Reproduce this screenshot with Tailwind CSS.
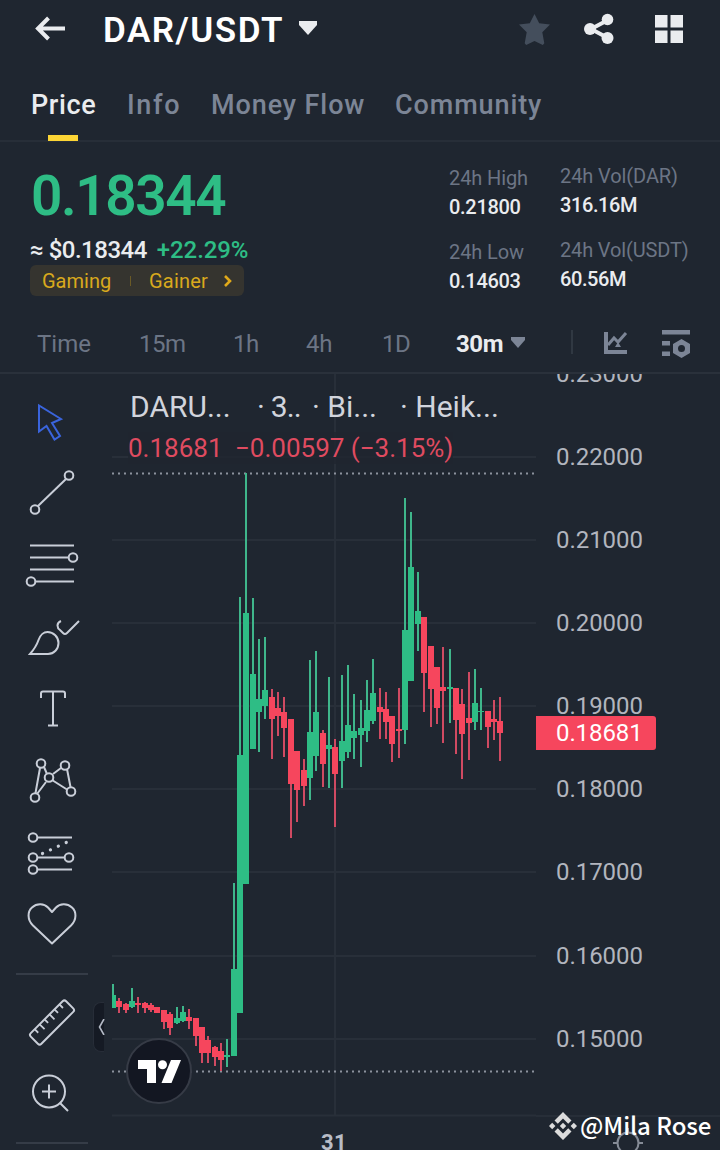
<!DOCTYPE html>
<html lang="en">
<head>
  <meta charset="UTF-8" />
  <meta name="viewport" content="width=device-width, initial-scale=1.0"/>
  <title>DAR/USDT</title>
  <script src="https://cdn.jsdelivr.net/npm/@tailwindcss/browser@4"></script>
</head>
<body class="bg-[#1f2630] font-['Roboto',sans-serif] w-[720px] h-[1150px] overflow-hidden relative text-[#eaecef] whitespace-nowrap">

  <!-- header -->
  <header class="h-[60px] flex items-center pl-[34px]">
    <svg class="w-8 h-8 -mt-1" viewBox="0 0 32 32" fill="none" stroke="#eaecef" stroke-width="4"><path d="M31 16.500H4M14.500 6 4 16.500 14.500 27"/></svg>
    <h1 class="ml-[37px] mt-[3px] text-[35px] font-semibold tracking-[1.5px] w-[195px] text-white">DAR/USDT</h1>
    <svg class="w-5 h-4 -mt-1" viewBox="0 0 20 16" fill="#eaecef"><path d="M1 1h18v4l-9 10L1 5z"/></svg>
    <svg class="ml-[201px] w-8 h-8 -mt-[3px]" viewBox="0 0 32 32" fill="#444e5c"><path d="m15.500 1 4.700 9.300 10.800 1.300-7.700 7.700 2 11-1.500 1.700L15.500 28l-8.300 4-1.500-1.700 2-11L0 11.600l10.800-1.300z"/></svg>
    <svg class="ml-[32px] w-8 h-8 -mt-[3px]" viewBox="0 0 32 32" fill="#eaecef"><path d="M25 7 8 16l17 9" fill="none" stroke="#eaecef" stroke-width="4"/><circle cx="24.500" cy="6.500" r="5.800"/><circle cx="7" cy="16" r="6"/><circle cx="24.500" cy="25" r="6"/></svg>
    <svg class="ml-[40px] w-7 h-7 -mt-[3px]" viewBox="0 0 28 28" fill="#eaecef"><path d="M0 0h12.500v12.500H0zM15.500 0H28v12.500H15.500zM0 15.500h12.500V28H0zM15.500 15.500H28V28H15.500z"/></svg>
  </header>

  <!-- tabs -->
  <nav class="h-[82px] border-b-2 border-[#272e38] flex gap-[31px] pl-[31px] pt-[28px] text-[27px] leading-[34px] font-medium text-[#7c8596]">
    <div class="w-[65px] text-[#eaecef] tracking-[0.6px]">Price
      <div class="w-[30px] h-[6px] mt-[13px] ml-[17px] bg-[#fcd535]"></div>
    </div>
    <div class="w-[53px] tracking-[1.7px]">Info</div>
    <div class="w-[153px] tracking-[0.9px]">Money Flow</div>
    <div class="tracking-[0.900px]">Community</div>
  </nav>

  <!-- price and 24h stats -->
  <section class="h-[170px] flex">
    <div class="w-[449px] pl-[31px] pt-[25px]">
      <div class="text-[55px] leading-[58px] font-semibold tracking-[-1.400px] text-[#2ebd85]">0.18344</div>
      <div class="mt-[11px] text-[24px] leading-[28px] font-medium flex gap-[10px] -ml-px">
        <span class="tracking-[-0.5px]">≈ $0.18344</span>
        <span class="text-[#2ebd85] tracking-[-0.1px]">+22.29%</span>
      </div>
      <div class="mt-[1px] -ml-px w-[214px] h-[31px] rounded-md bg-[#35342f] text-[#d9a91d] text-[20px] flex items-center pl-3">
        <span class="w-[88px]">Gaming</span>
        <span class="w-px h-[10px] bg-[#6b5a26]"></span>
        <span class="ml-[18px] w-[75px] tracking-[0.200px]">Gainer</span>
        <svg class="w-[8px] h-[12px]" viewBox="0 0 8 12" fill="none" stroke="#e0a91a" stroke-width="2.600"><path d="m1 1 5 5-5 5"/></svg>
      </div>
    </div>
    <div class="w-[111px] pt-[24px] text-[20px] leading-[24px]">
      <div class="text-[#6c7585] tracking-[-0.1px]">24h High</div>
      <div class="mt-[5px] font-medium tracking-[-0.3px]">0.21800</div>
      <div class="mt-[21px] text-[#6c7585] tracking-[-0.1px]">24h Low</div>
      <div class="mt-[5px] font-medium tracking-[-0.3px]">0.14603</div>
    </div>
    <div class="pt-[22px] text-[20px] leading-[24px]">
      <div class="text-[#6c7585] tracking-[-0.1px]">24h Vol(DAR)</div>
      <div class="mt-[5px] font-medium tracking-[-0.4px]">316.16M</div>
      <div class="mt-[21px] text-[#6c7585] tracking-[-0.150px]">24h Vol(USDT)</div>
      <div class="mt-[5px] font-medium tracking-[-0.400px]">60.56M</div>
    </div>
  </section>

  <!-- intervals -->
  <div class="h-[62px] border-b-2 border-[#2a313b] flex items-center pl-[37px] pt-[4px] text-[24px] text-[#6c7585]">
    <span class="w-[102px]">Time</span>
    <span class="w-[94px] tracking-[-0.5px]">15m</span>
    <span class="w-[73px] tracking-[-0.5px]">1h</span>
    <span class="w-[76px] tracking-[-0.3px]">4h</span>
    <span class="w-[74px] tracking-[-0.5px]">1D</span>
    <span class="w-[55px] font-bold text-[#eaecef] tracking-[-0.4px]">30m</span>
    <svg class="w-[14px] h-[11px] -mt-1" viewBox="0 0 14 11" fill="#7c8596"><path d="M0 0h14v3L7 11 0 3z"/></svg>
    <span class="ml-[46px] w-[2px] h-6 -mt-1 bg-[#303842]"></span>
    <svg class="ml-[31px] w-6 h-6 -mt-[2px]" viewBox="0 0 24 24" fill="none" stroke="#7c8596"><path d="M2 1v20h21" stroke-width="4"/><path d="m4 14 6-7 4 4 8-9" stroke-width="3"/><path d="m14 11 3 5h-6z" fill="#7c8596" stroke="none"/></svg>
    <svg class="ml-[34px] w-7 h-7 -mt-px" viewBox="0 0 28 28" fill="#7c8596"><path d="M0 0h28v4.500H0zM0 11h8v4.500H0zM0 21.500h8V26H0z"/><path fill-rule="evenodd" d="m19.500 9 8.500 5v9l-8.500 5-8.500-5v-9zm0 6a3.500 3.500 0 1 0 0 7 3.500 3.500 0 0 0 0-7z"/></svg>
  </div>

  <main class="flex h-[776px] overflow-hidden">
    <!-- drawing tools -->
    <aside class="w-[104px] h-full pt-[12px] flex flex-col shrink-0">
      <svg class="w-[104px] h-[587px] shrink-0" viewBox="0 386 104 587" fill="none" stroke="#c9ced8" stroke-width="2">
        <path stroke="#3a64dc" d="M39 405.500v26l7.500-5.500 8 13.500 5.500-3.500-8-13 9-4z"/>
        <path d="m38 506 28-27"/><circle cx="35" cy="509.500" r="4.300"/><circle cx="69" cy="475.500" r="4.300"/>
        <path d="M30 545.500h44M30 557.500h38M30 569.500h44M36 581.500h38"/><circle cx="73" cy="557.500" r="4.300"/><circle cx="31" cy="581.500" r="4.300"/>
        <path d="M30 654h18c6 0 10.500-5 10.500-11s-5-11-11-11c-5 0-7 3-9 8-2 6-5 10-8.500 14zM61 621c-5 2-4 7-1 9l3 3q2 2 4 0l12-12"/>
        <path d="M41 698v-4.500q0-2 2-2h20q2 0 2 2v4.500M53 691.500v34M48 725.500h10"/>
        <path d="m40 768-4.500 25M44 767l3 7M53 774l8-6M67 769l3.500 18M52 780l15 9.500M46 782l-9 12"/>
        <circle cx="41" cy="763.500" r="4.300"/><circle cx="65" cy="765.500" r="4.300"/><circle cx="49" cy="777.500" r="4.300"/><circle cx="71" cy="791.500" r="4.300"/><circle cx="35" cy="797.500" r="4.300"/>
        <path d="M37 837.500h35M37 857.500h28M37 869.500h35"/><circle cx="33" cy="837.500" r="4.300"/><circle cx="33" cy="857.500" r="4.300"/><circle cx="69" cy="857.500" r="4.300"/><circle cx="33" cy="869.500" r="4.300"/>
        <path d="m42.500 853.500 26-12" stroke-width="3.200" stroke-linecap="round" stroke-dasharray="0.1 8.600"/>
        <path d="M52 943.500 33 925.500c-6-6-5.500-14-1-18 5-4.500 12-4 16 0l4 4.500 4-4.500c4-4 11-4.500 16 0 4.500 4 5 12-1 18z" stroke-linejoin="round"/>
      </svg>
      <div class="mx-auto w-[72px] h-[2px] bg-[#353c47] shrink-0"></div>
      <div class="relative shrink-0">
        <svg class="w-[104px] h-[167px]" viewBox="0 975 104 167" fill="none" stroke="#c9ced8" stroke-width="2">
          <g transform="rotate(-45 52 1022.500)"><rect x="27" y="1015" width="50" height="15" rx="2.500"/><path d="M35 1015v5M42 1015v7M49 1015v5M56 1015v7M63 1015v5M70 1015v5" stroke-width="1.800"/></g>
          <circle cx="49" cy="1091.500" r="16"/><path d="M49 1084.500v14M42 1091.500h14M60 1103l8 8"/>
        </svg>
        <!-- collapse handle -->
        <div class="absolute right-0 top-[27px] w-[11px] h-[50px] rounded-l-lg bg-[#151a24] border border-r-0 border-[#272d38]">
          <svg class="ml-[3px] mt-[16px] w-[8px] h-[16px]" viewBox="0 0 8 16" fill="none" stroke="#b4bac6" stroke-width="1.600"><path d="M7 0 2.500 8 7 16"/></svg>
        </div>
      </div>
      <div class="mx-auto w-[72px] h-[2px] bg-[#353c47] shrink-0"></div>
    </aside>

    <!-- chart -->
    <div class="relative ml-2 w-[424px] h-full shrink-0">
      <svg id="chart" class="w-[424px] h-[776px]" viewBox="112 374 424 776">
        <path d="M112 457h424M112 540h424M112 623h424M112 706h424M112 789h424M112 872h424M112 956h424M112 1039h424M335 374v741M112 1115.500h424" stroke="#282f39" stroke-width="2"/>
        <path d="M112 473.500h424M112 1071.500h424" stroke="#8c929d" stroke-width="2" stroke-dasharray="2 4"/>
      </svg>
      <div class="absolute left-[18px] top-[15px] h-[36px] leading-[36px] text-[30px] text-[#d1d4dc] flex">
        <span class="w-[127px]">DARU...</span>
        <span class="w-[55px] tracking-[-0.8px]">· 3..</span>
        <span class="w-[88px]">· Bi...</span>
        <span>· Heik...</span>
      </div>
      <div class="absolute left-[16px] top-[58px] leading-[32px] text-[26px] text-[#df4b60] flex bg-[#1f2630]/80 h-[32px]">
        <span class="w-[107px]">0.18681</span>
        <span>−0.00597 (−3.15%)</span>
      </div>
      <div class="absolute left-[14px] top-[664px] w-[66px] h-[66px] rounded-full bg-[#131722] border-2 border-[#363b46] flex items-center justify-center">
        <svg class="w-[43px] h-[23px]" viewBox="0 0 43 23" fill="#fff"><path d="M0 0h18v23H9V9H0zM33 0h10l-9.500 23h-10z"/><circle cx="24.500" cy="4.800" r="4.500"/></svg>
      </div>
      <div class="absolute left-[209px] top-[756px] leading-[26px] text-[22px] font-bold text-[#b8bcc6] tracking-[0.5px]">31</div>
    </div>

    <!-- price scale -->
    <div class="relative flex-1 h-full">
      <div class="h-[743px] overflow-hidden border-b-2 border-[#272e38] pl-[20px] text-[24px] text-[#b2b5be]">
        <div class="-mt-[42px] grid auto-rows-[83.150px] items-center tracking-[-0.050px]">
          <span>0.23000</span>
          <span>0.22000</span>
          <span>0.21000</span>
          <span>0.20000</span>
          <span>0.19000</span>
          <span>0.18000</span>
          <span>0.17000</span>
          <span>0.16000</span>
          <span>0.15000</span>
        </div>
      </div>
      <div class="absolute left-0 top-[342px] w-[120px] h-[34px] rounded-r-[3px] bg-[#f6465d] text-white text-[24px] leading-[35px] pl-[20px] tracking-[-0.100px]">0.18681</div>
      <svg class="absolute left-[76px] top-[753px] w-[32px] h-[32px]" viewBox="0 0 32 32" fill="none" stroke="#858b96" stroke-width="2"><circle cx="16" cy="16" r="10.500"/><path d="M1 16h5M26 16h5M16 1v5"/></svg>
    </div>
  </main>

  <!-- author mark -->
  <div class="absolute left-[549px] top-[1108px] h-[36px] flex items-center gap-[3px] text-white">
    <svg class="w-[28px] h-[28px]" viewBox="0 0 28 28" fill="#dcdcdc"><path d="m14 0 8.500 8.500-3.300 3.300L14 6.600l-5.200 5.200-3.300-3.300zM14 28l8.500-8.500-3.300-3.300L14 21.400l-5.200-5.200-3.300 3.300zM14 10.800l3.200 3.200-3.200 3.200-3.200-3.200zM3.200 10.800 6.400 14l-3.200 3.200L0 14zM24.800 10.800 28 14l-3.200 3.200-3.200-3.200z"/></svg>
    <span class="font-['Noto_Sans_CJK_SC',sans-serif] text-[24px] leading-[36px] -mt-[2px] font-medium tracking-[-0.050px]">@Mila Rose</span>
  </div>

  <script>
    // each candle: [up, high, low, body top, body bottom]
    const candles = [
      [1,984,1008,995,1008],[0,998,1013,1001,1007],[0,1003,1013,1004,1010],[1,988,1008,1001,1007],
      [0,997,1013,1003,1005],[0,1002,1013,1003,1008],[0,1003,1012,1005,1010],[0,1007,1013,1007,1013],
      [0,1010,1029,1010,1022],[0,1012,1035,1014,1028],[1,1007,1024,1018,1023],[1,1006,1022,1012,1021],
      [0,1009,1029,1017,1021],[0,1018,1046,1018,1036],[0,1027,1063,1027,1053],[0,1036,1063,1040,1053],
      [0,1046,1066,1047,1057],[0,1043,1071,1051,1060],[1,1039,1067,1055,1057],[1,883,1056,969,1056],
      [1,597,1013,755,1013],[1,473,884,613,884],[1,598,749,674,749],[1,639,752,699,712],
      [1,637,719,690,706],[0,689,759,697,719],[0,692,736,708,716],[0,697,757,712,728],
      [0,719,838,719,784],[0,751,822,751,790],[0,759,806,770,786],[1,660,800,732,778],
      [1,651,771,712,756],[0,730,787,733,764],[1,677,788,745,749],[0,739,827,747,774],
      [1,675,788,741,761],[1,665,758,725,752],[1,694,759,731,738],[1,700,767,728,735],
      [1,680,742,710,731],[1,659,724,693,721],[0,688,739,707,712],[0,692,739,709,722],
      [0,716,762,716,744],[0,688,758,729,731],[1,498,744,630,730],[1,512,681,567,681],
      [1,572,651,611,624],[0,617,712,617,673],[0,646,727,646,689],[0,667,724,667,708],
      [0,647,743,687,691],[1,649,723,687,689],[0,688,754,688,720],[0,689,779,704,734],
      [0,672,760,718,723],[1,669,730,703,722],[1,688,730,711,712],[0,711,748,711,727],
      [0,700,740,719,722],[0,697,761,721,733]
    ];
    const chart = document.getElementById("chart");
    const rect = (x, y, w, h, fill) => {
      const r = document.createElementNS("http://www.w3.org/2000/svg", "rect");
      Object.entries({ x, y, width: w, height: h, fill }).forEach(([k, v]) => r.setAttribute(k, v));
      chart.appendChild(r);
    };
    candles.forEach(([up, high, low, top, bottom], i) => {
      const x = Math.round(113 + i * 6.35);
      rect(x - 1, high, 2, low - high, up ? "#3fb68b" : "#d04a62");
      rect(x - 3, top, 6, bottom - top, up ? "#2ebd85" : "#f6465d");
    });
  </script>
</body>
</html>
